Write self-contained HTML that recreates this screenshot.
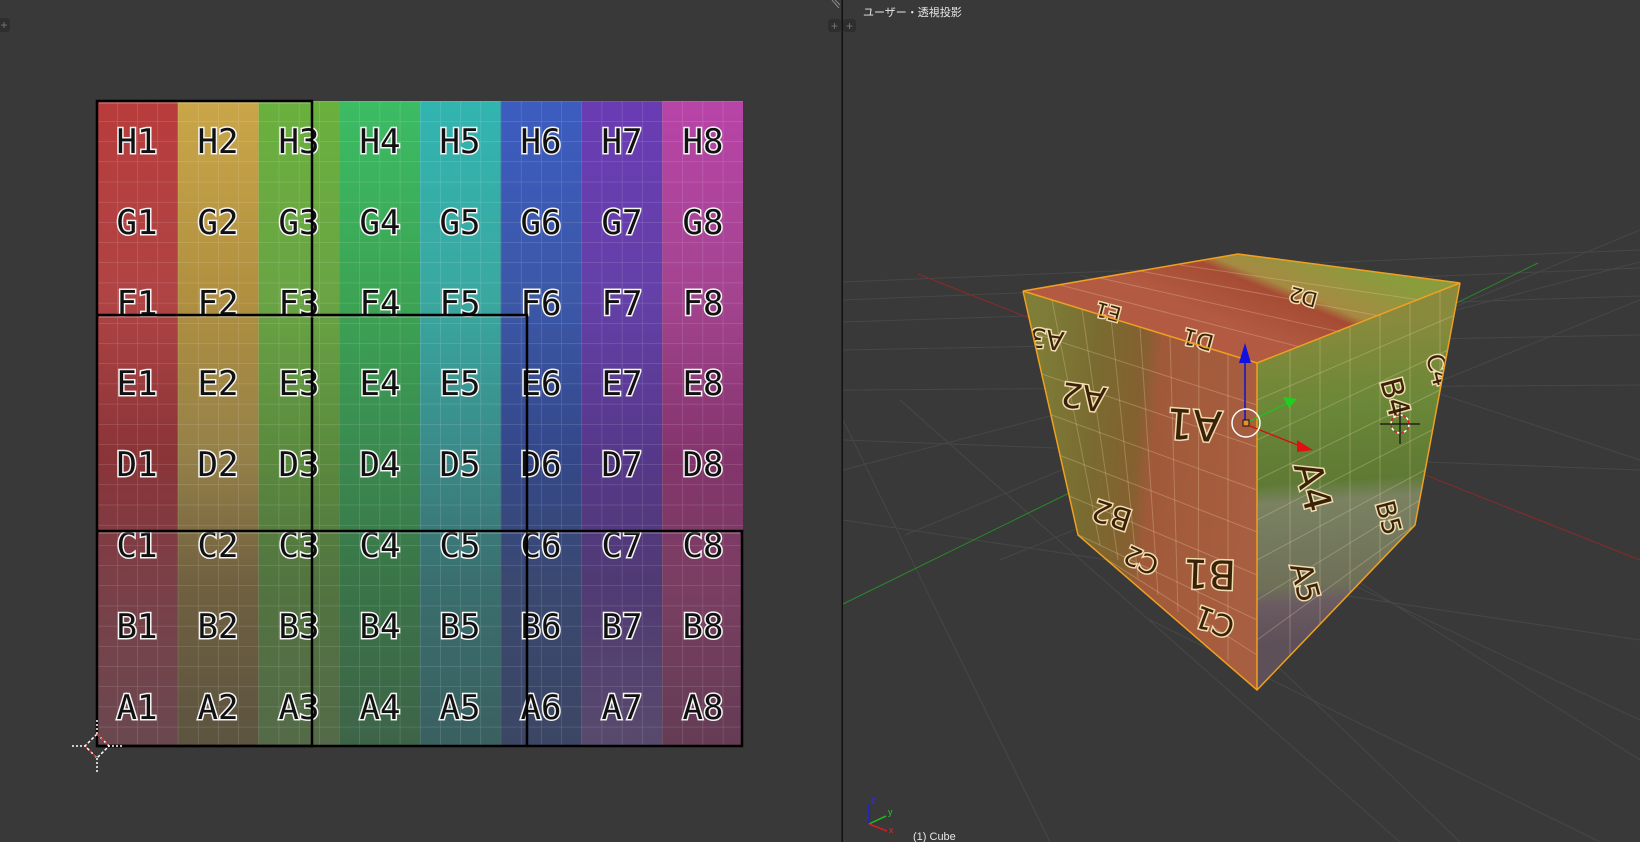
<!DOCTYPE html>
<html><head><meta charset="utf-8"><style>
html,body{margin:0;padding:0;background:#393939;overflow:hidden}
svg{display:block}
.l{font-family:"DejaVu Sans Mono","Liberation Mono",monospace;font-size:34px;fill:#111;stroke:#f4f4f4;stroke-width:3px;paint-order:stroke;text-anchor:middle}
.c{font-family:"DejaVu Sans","Liberation Sans",sans-serif;font-size:30px;fill:#3a2208;stroke:#f0dcb0;stroke-width:3px;paint-order:stroke;text-anchor:middle}
.ui{font-family:"Liberation Sans","Noto Sans CJK JP",sans-serif;font-size:11px;fill:#e6e6e6}
</style></head><body>
<svg width="1640" height="842" viewBox="0 0 1640 842" xmlns="http://www.w3.org/2000/svg">
<defs>
<linearGradient id="g1" x1="0" y1="0" x2="0" y2="1"><stop offset="0" stop-color="#b83c3c"/><stop offset=".3" stop-color="#b04444"/><stop offset=".55" stop-color="#8a3438"/><stop offset=".75" stop-color="#7a4048"/><stop offset="1" stop-color="#6a4850"/></linearGradient>
<linearGradient id="g2" x1="0" y1="0" x2="0" y2="1"><stop offset="0" stop-color="#caa648"/><stop offset=".3" stop-color="#b09040"/><stop offset=".55" stop-color="#948048"/><stop offset=".75" stop-color="#706040"/><stop offset="1" stop-color="#5c5440"/></linearGradient>
<linearGradient id="g3" x1="0" y1="0" x2="0" y2="1"><stop offset="0" stop-color="#6ab03e"/><stop offset=".3" stop-color="#6aa444"/><stop offset=".55" stop-color="#5a8a3e"/><stop offset=".75" stop-color="#527440"/><stop offset="1" stop-color="#546a48"/></linearGradient>
<linearGradient id="g4" x1="0" y1="0" x2="0" y2="1"><stop offset="0" stop-color="#3cbc64"/><stop offset=".3" stop-color="#3ca454"/><stop offset=".55" stop-color="#3a8a50"/><stop offset=".75" stop-color="#3a7448"/><stop offset="1" stop-color="#3e6448"/></linearGradient>
<linearGradient id="g5" x1="0" y1="0" x2="0" y2="1"><stop offset="0" stop-color="#32b4b0"/><stop offset=".3" stop-color="#3aa8a0"/><stop offset=".55" stop-color="#3a8a88"/><stop offset=".75" stop-color="#3a6e6e"/><stop offset="1" stop-color="#3a6060"/></linearGradient>
<linearGradient id="g6" x1="0" y1="0" x2="0" y2="1"><stop offset="0" stop-color="#3c5cc0"/><stop offset=".3" stop-color="#3c58a8"/><stop offset=".55" stop-color="#34488a"/><stop offset=".75" stop-color="#3a4870"/><stop offset="1" stop-color="#3c4664"/></linearGradient>
<linearGradient id="g7" x1="0" y1="0" x2="0" y2="1"><stop offset="0" stop-color="#6a3cb4"/><stop offset=".3" stop-color="#6440a8"/><stop offset=".55" stop-color="#56388a"/><stop offset=".75" stop-color="#503a74"/><stop offset="1" stop-color="#584a6c"/></linearGradient>
<linearGradient id="g8" x1="0" y1="0" x2="0" y2="1"><stop offset="0" stop-color="#b844a8"/><stop offset=".3" stop-color="#a44490"/><stop offset=".55" stop-color="#84346c"/><stop offset=".75" stop-color="#7a3e62"/><stop offset="1" stop-color="#643c54"/></linearGradient>
<pattern id="sub" x="97" y="101" width="20.1875" height="20.1875" patternUnits="userSpaceOnUse"><path d="M0 0H20.19M0 0V20.19" stroke="#fff" stroke-opacity=".22" stroke-width="1" fill="none"/></pattern>
<linearGradient id="ct" gradientUnits="userSpaceOnUse" x1="1290" y1="350" x2="1330" y2="255"><stop offset="0" stop-color="#b25a42"/><stop offset=".45" stop-color="#a64c34"/><stop offset=".55" stop-color="#a68a42"/><stop offset="1" stop-color="#8a9c3c"/></linearGradient>
<linearGradient id="cl" gradientUnits="userSpaceOnUse" x1="1030" y1="400" x2="1257" y2="420"><stop offset="0" stop-color="#7e7e38"/><stop offset=".3" stop-color="#7a6a30"/><stop offset=".48" stop-color="#856030"/><stop offset=".56" stop-color="#a05a3a"/><stop offset="1" stop-color="#a85e40"/></linearGradient>
<linearGradient id="cr" gradientUnits="userSpaceOnUse" x1="1330" y1="320" x2="1350" y2="640"><stop offset="0" stop-color="#8a8a3c"/><stop offset=".25" stop-color="#6c8838"/><stop offset=".5" stop-color="#5e7a34"/><stop offset=".56" stop-color="#7a8262"/><stop offset=".82" stop-color="#6e7058"/><stop offset=".88" stop-color="#6a5a62"/><stop offset="1" stop-color="#5e5058"/></linearGradient>
<clipPath id="cub"><path d="M1023 291L1238 254L1460 283L1415 525L1257 690L1078 535Z"/></clipPath>
</defs>
<rect width="1640" height="842" fill="#393939"/>
<rect x="97" y="101" width="80.75" height="645" fill="url(#g1)"/>
<rect x="177.75" y="101" width="80.75" height="645" fill="url(#g2)"/>
<rect x="258.5" y="101" width="80.75" height="645" fill="url(#g3)"/>
<rect x="339.25" y="101" width="80.75" height="645" fill="url(#g4)"/>
<rect x="420" y="101" width="80.75" height="645" fill="url(#g5)"/>
<rect x="500.75" y="101" width="80.75" height="645" fill="url(#g6)"/>
<rect x="581.5" y="101" width="80.75" height="645" fill="url(#g7)"/>
<rect x="662.25" y="101" width="80.75" height="645" fill="url(#g8)"/>
<rect x="97" y="101" width="646" height="645" fill="url(#sub)"/>
<g class="l">
<text x="137" y="153">H1</text><text x="218" y="153">H2</text><text x="299" y="153">H3</text><text x="380" y="153">H4</text><text x="460" y="153">H5</text><text x="541" y="153">H6</text><text x="622" y="153">H7</text><text x="703" y="153">H8</text>
<text x="137" y="234">G1</text><text x="218" y="234">G2</text><text x="299" y="234">G3</text><text x="380" y="234">G4</text><text x="460" y="234">G5</text><text x="541" y="234">G6</text><text x="622" y="234">G7</text><text x="703" y="234">G8</text>
<text x="137" y="315">F1</text><text x="218" y="315">F2</text><text x="299" y="315">F3</text><text x="380" y="315">F4</text><text x="460" y="315">F5</text><text x="541" y="315">F6</text><text x="622" y="315">F7</text><text x="703" y="315">F8</text>
<text x="137" y="395">E1</text><text x="218" y="395">E2</text><text x="299" y="395">E3</text><text x="380" y="395">E4</text><text x="460" y="395">E5</text><text x="541" y="395">E6</text><text x="622" y="395">E7</text><text x="703" y="395">E8</text>
<text x="137" y="476">D1</text><text x="218" y="476">D2</text><text x="299" y="476">D3</text><text x="380" y="476">D4</text><text x="460" y="476">D5</text><text x="541" y="476">D6</text><text x="622" y="476">D7</text><text x="703" y="476">D8</text>
<text x="137" y="557">C1</text><text x="218" y="557">C2</text><text x="299" y="557">C3</text><text x="380" y="557">C4</text><text x="460" y="557">C5</text><text x="541" y="557">C6</text><text x="622" y="557">C7</text><text x="703" y="557">C8</text>
<text x="137" y="638">B1</text><text x="218" y="638">B2</text><text x="299" y="638">B3</text><text x="380" y="638">B4</text><text x="460" y="638">B5</text><text x="541" y="638">B6</text><text x="622" y="638">B7</text><text x="703" y="638">B8</text>
<text x="137" y="719">A1</text><text x="218" y="719">A2</text><text x="299" y="719">A3</text><text x="380" y="719">A4</text><text x="460" y="719">A5</text><text x="541" y="719">A6</text><text x="622" y="719">A7</text><text x="703" y="719">A8</text>
</g>
<g fill="none" stroke="#000" stroke-width="2.5">
<path d="M97 101H312V746H97Z"/>
<path d="M97 315H527V746"/>
<path d="M97 531H742V746H97"/>
</g>
<g fill="none" stroke="#d8d8d8" stroke-width=".8" opacity=".6">
<path d="M99 103H310M99 317H525M99 533H740"/>
</g>
<g fill="none" stroke-width="1.5">
<path d="M97 734L109 746L97 758L85 746Z" stroke="#fff" stroke-dasharray="3 2"/>
<path d="M97 734L109 746M85 746L97 758" stroke="#d22" stroke-dasharray="3 3"/>
<path d="M72 746H86M108 746H122M97 720V734M97 758V772" stroke="#fff" stroke-dasharray="2 2"/>
</g>
<rect x="-4" y="18" width="14" height="14" rx="3" fill="#2e2e2e"/>
<text x="4" y="29" font-family="Liberation Sans" font-size="12" fill="#777" text-anchor="middle">+</text>

<rect x="843" y="0" width="797" height="842" fill="#393939"/>
<g stroke="#474747" stroke-width="1" fill="none">
<path d="M843 282L1640 250M843 300L1640 268M843 322L1640 296M843 350L1640 335M843 390L1640 385M843 440L1640 470M843 520L1640 640"/>
<path d="M905 535L1640 230M1000 560L1640 300M843 470L1640 262"/>
<path d="M1080 275L1640 460M843 420L1050 842M900 400L1400 842M1300 560L1640 720M1150 620L1600 842M1250 640L1460 842M1340 570L1640 760"/>
</g>
<path d="M918 274L1640 560" stroke="#8a2a2a" stroke-width="1"/>
<path d="M843 604L1538 263" stroke="#2a8a2a" stroke-width="1"/>
<path d="M1023 291L1238 254L1460 283L1257 363Z" fill="url(#ct)"/>
<path d="M1023 291L1257 363L1257 690L1078 535Z" fill="url(#cl)"/>
<path d="M1257 363L1460 283L1415 525L1257 690Z" fill="url(#cr)"/>
<g clip-path="url(#cub)" stroke="#f0d8b0" stroke-opacity=".28" fill="none" stroke-width="1">
<path d="M1052 300L1100 545M1082 309L1118 560M1111 318L1138 578M1140 327L1158 595M1170 336L1178 612M1199 345L1198 630M1228 354L1228 660"/>
<path d="M1023 330L1257 405M1030 370L1257 447M1038 410L1257 490M1046 450L1257 532M1055 490L1257 575M1064 528L1257 620M1257 655L1100 555"/>
<path d="M1257 400L1455 315M1257 440L1448 350M1257 480L1440 390M1257 520L1432 430M1257 560L1425 470M1257 600L1420 500M1257 640L1415 525"/>
<path d="M1290 350L1290 655M1320 338L1320 625M1350 326L1350 595M1380 314L1380 565M1410 302L1410 540M1440 290L1440 515"/>
<path d="M1060 285L1300 347M1100 278L1340 332M1140 271L1380 316M1180 265L1420 300"/>
</g>
<g class="c" clip-path="url(#cub)">
<text x="1085" y="385" transform="rotate(188 1085 385)" font-size="34">A2</text>
<text x="1195" y="410" transform="rotate(184 1195 410)" font-size="42">A1</text>
<text x="1115" y="505" transform="rotate(198 1115 505)">B2</text>
<text x="1210" y="560" transform="rotate(182 1210 560)" font-size="40">B1</text>
<text x="1218" y="612" transform="rotate(200 1218 612)">C1</text>
<text x="1145" y="552" transform="rotate(205 1145 552)" font-size="26">C2</text>
<text x="1048" y="330" transform="rotate(188 1048 330)" font-size="26">A3</text>
<text x="1200" y="332" transform="rotate(195 1200 332)" font-size="22">D1</text>
<text x="1305" y="290" transform="rotate(195 1305 290)" font-size="20">D2</text>
<text x="1110" y="305" transform="rotate(195 1110 305)" font-size="20">E1</text>
<text x="1300" y="490" transform="rotate(75 1300 490)" font-size="38">A4</text>
<text x="1385" y="400" transform="rotate(75 1385 400)">B4</text>
<text x="1295" y="585" transform="rotate(75 1295 585)">A5</text>
<text x="1380" y="520" transform="rotate(75 1380 520)" font-size="26">B5</text>
<text x="1430" y="372" transform="rotate(75 1430 372)" font-size="24">C4</text>
</g>
<path d="M1023 291L1238 254L1460 283L1257 363ZM1257 363V690M1023 291L1078 535L1257 690L1415 525L1460 283" fill="none" stroke="#f0a020" stroke-width="1.5"/>
<g stroke-width="1.5" fill="none">
<circle cx="1400" cy="424" r="9" stroke="#fff" stroke-dasharray="4 3"/>
<circle cx="1400" cy="424" r="9" stroke="#d22" stroke-dasharray="3 4" stroke-dashoffset="4"/>
<path d="M1380 424H1420M1400 404V444" stroke="#111" stroke-width="1.2"/>
</g>
<path d="M1245 423V358" stroke="#1010d0" stroke-width="1.5"/>
<path d="M1245 343L1239 363H1251Z" fill="#1010e0"/>
<path d="M1250 421L1290 402" stroke="#20c020" stroke-width="1.3"/>
<path d="M1297 399L1283 397L1289 408Z" fill="#20d020"/>
<path d="M1250 426L1300 446" stroke="#d01010" stroke-width="1.3"/>
<path d="M1313 450L1297 440L1297 452Z" fill="#e01010"/>
<circle cx="1246" cy="423" r="14" fill="none" stroke="#fff" stroke-width="1.5"/>
<rect x="1243" y="420" width="6" height="6" fill="#e8902a" stroke="#111" stroke-width="1"/>
<rect x="841.5" y="0" width="1.5" height="842" fill="#111"/>
<path d="M832 0L839 8M835 0L840 5" stroke="#888" stroke-width="1"/>
<rect x="828" y="19" width="13" height="13" rx="3" fill="#2e2e2e"/>
<rect x="843" y="19" width="13" height="13" rx="3" fill="#2e2e2e"/>
<text x="834.5" y="30" font-family="Liberation Sans" font-size="12" fill="#777" text-anchor="middle">+</text>
<text x="849.5" y="30" font-family="Liberation Sans" font-size="12" fill="#777" text-anchor="middle">+</text>
<text class="ui" x="863" y="16">ユーザー・透視投影</text>
<path d="M869 824V804" stroke="#2020e0" stroke-width="1.5"/>
<path d="M869 824L886 816" stroke="#20c020" stroke-width="1.5"/>
<path d="M869 824L887 831" stroke="#d02020" stroke-width="1.5"/>
<text x="871" y="803" font-family="Liberation Sans" font-size="9" fill="#3030e0">z</text>
<text x="888" y="815" font-family="Liberation Sans" font-size="9" fill="#30c030">y</text>
<text x="889" y="833" font-family="Liberation Sans" font-size="9" fill="#d03030">x</text>
<text class="ui" x="913" y="840">(1) Cube</text>
</svg>
</body></html>
